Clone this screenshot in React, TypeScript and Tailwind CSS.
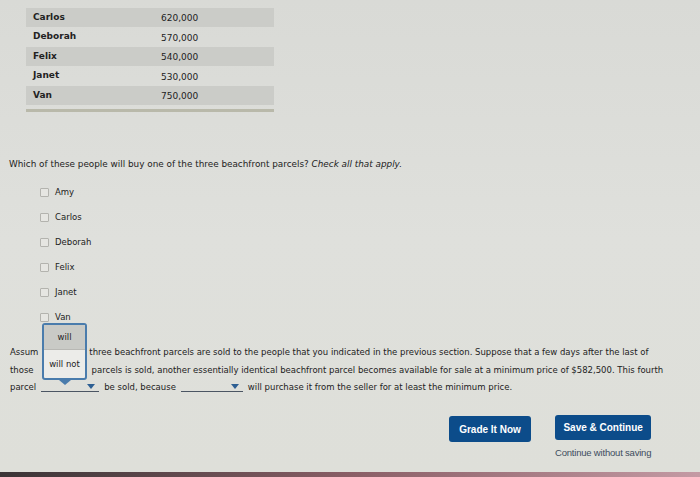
import React from "react";

const rows = [
  { name: "Carlos", value: "620,000" },
  { name: "Deborah", value: "570,000" },
  { name: "Felix", value: "540,000" },
  { name: "Janet", value: "530,000" },
  { name: "Van", value: "750,000" },
];

const people = ["Amy", "Carlos", "Deborah", "Felix", "Janet", "Van"];

function Blank({ width }: { width: string }) {
  return (
    <span className={`relative inline-block ${width} h-[11px] border-b border-[#4b5563] align-[-2px] mx-[5px]`}>
      <span className="absolute right-[4px] top-[3px] w-0 h-0 border-l-[4px] border-r-[4px] border-t-[5px] border-l-transparent border-r-transparent border-t-[#2d5f93]" />
    </span>
  );
}

export default function App() {
  return (
    <div
      className="relative w-[700px] h-[477px] overflow-hidden bg-gradient-to-b from-[#d9dad6] via-[#dfe0dc] to-[#dedfd9] text-[#222]"
      style={{ fontFamily: '"DejaVu Sans", Verdana, sans-serif' }}
    >
      {/* data table */}
      <div className="ml-[26px] pt-[8px] w-[248px]">
        {rows.map((r, i) => (
          <div
            key={r.name}
            className={`flex items-center h-[19.4px] text-[9px] ${i % 2 === 0 ? "bg-[#cbccc8]" : ""}`}
          >
            <span className="w-[135px] pl-[7px] font-bold">{r.name}</span>
            <span className="pt-[3px]">{r.value}</span>
          </div>
        ))}
        <div className="mt-[4px] h-[3px] bg-[#b9b9aa]" />
      </div>

      {/* question */}
      <p className="mt-[46px] ml-[9px] text-[8.85px]">
        Which of these people will buy one of the three beachfront parcels? <i>Check all that apply.</i>
      </p>

      <div className="mt-[15px] ml-[40px] flex flex-col gap-[13px]">
        {people.map((p) => (
          <label key={p} className="flex items-center gap-[6px] text-[8.5px] h-[12px]">
            <span className="w-[9px] h-[9px] border border-[#b3b3ae] bg-[#e6e6e2] rounded-[1px]" />
            <span>{p}</span>
          </label>
        ))}
      </div>

      {/* paragraph with dropdowns (part of lines 1-2 hidden by the open menu) */}
      <div className="mt-[21px] ml-[10px] w-[680px] text-[8.5px] leading-[17.5px]">
        <p>
          Assum<span className="inline-block w-[51px]" />three beachfront parcels are sold to the people that you indicated in the previous section. Suppose that a few days after the last of
        </p>
        <p>
          those<span className="inline-block w-[58px]" />parcels is sold, another essentially identical beachfront parcel becomes available for sale at a minimum price of $582,500. This fourth
        </p>
        <p>
          parcel
          <Blank width="w-[58px]" />
          be sold, because
          <Blank width="w-[62px]" />
          will purchase it from the seller for at least the minimum price.
        </p>
      </div>

      {/* open dropdown popup */}
      <div className="absolute left-[42px] top-[323px] w-[45px]">
        <div className="border-2 border-[#4a7cac] rounded-[3px] bg-[#ecece9] overflow-hidden text-[8.5px]">
          <div className="h-[25px] flex items-center justify-center bg-[#c9cac6] border-b border-[#b8b8b4]">will</div>
          <div className="h-[28px] flex items-center justify-center">will not</div>
        </div>
        <div className="mx-auto w-0 h-0 border-l-[6px] border-r-[6px] border-t-[5px] border-l-transparent border-r-transparent border-t-[#4a7cac]" />
      </div>

      {/* buttons */}
      <div
        className="absolute left-[449px] top-[415px] flex gap-[24px]"
        style={{ fontFamily: '"Liberation Sans", Arial, sans-serif' }}
      >
        <button className="w-[82px] h-[26px] mt-[1px] bg-[#0c4c8a] rounded-[3px] text-white font-bold text-[10px]">
          Grade It Now
        </button>
        <div className="flex flex-col items-center">
          <button className="w-[96px] h-[25px] bg-[#0c4c8a] rounded-[3px] text-white font-bold text-[10px]">
            Save &amp; Continue
          </button>
          <span className="mt-[6px] text-[9.5px] text-[#3d4c5e] tracking-[-0.2px]">Continue without saving</span>
        </div>
      </div>

      {/* photo bottom edge */}
      <div className="absolute left-0 right-0 bottom-0 h-[5px] bg-gradient-to-r from-[#3a3436] via-[#8a5e66] to-[#c49aa4]" />
    </div>
  );
}
